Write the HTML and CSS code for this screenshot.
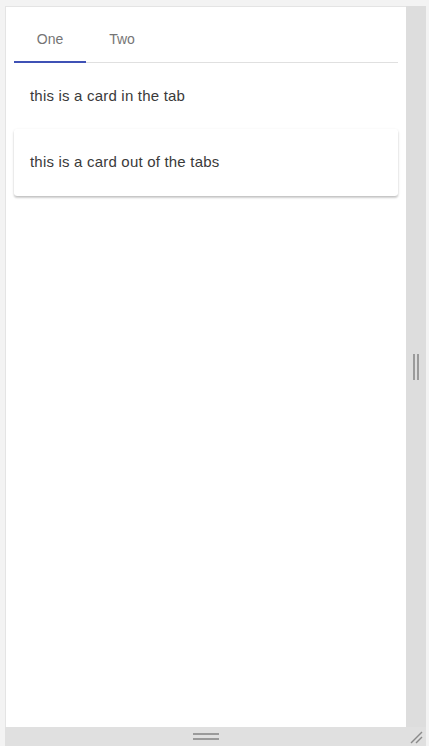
FILE: index.html
```html
<!DOCTYPE html>
<html>
<head>
<meta charset="utf-8">
<link rel="stylesheet" href="styles.css">
</head>
<body>
<div class="device">
  <div class="panel">
    <div class="tabs">
      <div class="tab active">One</div>
      <div class="tab">Two</div>
    </div>
    <div class="tab-card">this is a card in the tab</div>
    <div class="card">this is a card out of the tabs</div>
  </div>
  <div class="handle-right"><span class="grip-v"></span></div>
  <div class="handle-bottom"><span class="grip-h"></span></div>
  <div class="corner">
    <svg width="14" height="14" viewBox="0 0 14 14">
      <line x1="2" y1="13" x2="13" y2="2" stroke="#8a8a8a" stroke-width="1.4"/>
      <line x1="7" y1="13" x2="13" y2="7" stroke="#8a8a8a" stroke-width="1.4"/>
    </svg>
  </div>
</div>
</body>
</html>
```
FILE: styles.css
```css
html, body {
  margin: 0;
  padding: 0;
  background: #f3f3f3;
  height: 100%;
  overflow: hidden;
}
.device {
  margin: 6px 0 0 5px;
  display: grid;
  grid-template-columns: 401px 20px;
  grid-template-rows: 721px 19px;
}
.panel {
  background: #fff;
  border-left: 1px solid #e4e4e4;
  border-top: 1px solid #e4e4e4;
  padding: 8px;
  font-family: "Liberation Sans", Arial, sans-serif;
}
.tabs {
  display: flex;
  height: 48px;
  border-bottom: 1px solid #e0e0e0;
  box-sizing: border-box;
}
.tab {
  width: 72px;
  display: flex;
  align-items: center;
  justify-content: center;
  font-size: 14px;
  color: #757575;
  box-sizing: border-box;
  margin-bottom: -1px;
}
.tab.active {
  border-bottom: 2px solid #3f51b5;
  padding-top: 2px;
}
.tab-card {
  padding: 22px 16px 21px;
  font-size: 15px;
  letter-spacing: 0.2px;
  line-height: 24px;
  color: #3a3a3a;
  margin-top: -1px;
}
.card {
  padding: 21px 16px 22px;
  font-size: 15px;
  letter-spacing: 0.2px;
  line-height: 24px;
  color: #3a3a3a;
  border-radius: 3px;
  box-shadow: 0 2px 2px 0 rgba(0,0,0,.14), 0 1px 3px 0 rgba(0,0,0,.12), 0 1px 1px -1px rgba(0,0,0,.2);
}
.handle-right {
  background: #dddddd;
  display: flex;
  align-items: center;
  justify-content: flex-start;
  padding-left: 7px;
}
.grip-v {
  width: 2px;
  height: 26px;
  border-left: 2px solid #9a9a9a;
  border-right: 2px solid #9a9a9a;
}
.handle-bottom {
  background: #e0e0e0;
  display: flex;
  justify-content: center;
  align-items: center;
  padding-left: 1px;
}
.grip-h {
  width: 26px;
  height: 3px;
  border-top: 2px solid #9a9a9a;
  border-bottom: 2px solid #9a9a9a;
}
.corner {
  background: #e0e0e0;
  display: flex;
  align-items: flex-end;
  justify-content: flex-end;
  padding: 0 3px 2px 0;
}
```
